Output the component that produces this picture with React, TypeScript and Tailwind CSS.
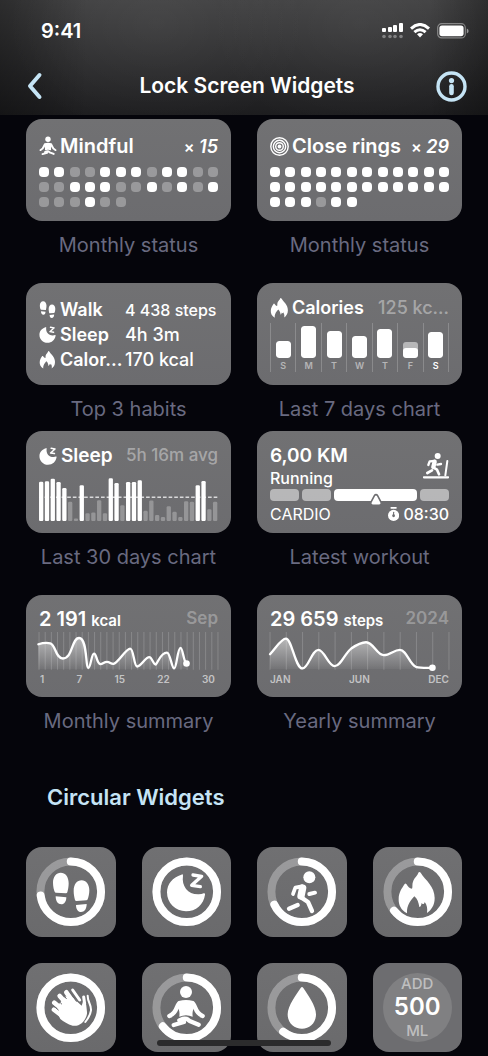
import type { ReactNode } from "react";

type IconProps = { className?: string };

function Icon({ className, children }: IconProps & { children: ReactNode }) {
  return (
    <svg viewBox="0 0 120 120" fill="currentColor" aria-hidden="true" className={`shrink-0 overflow-visible ${className ?? "size-10"}`}>
      {children}
    </svg>
  );
}

function StepsIcon({ className }: IconProps) {
  const foot = "M29 2C16 2 6 14 6 32C6 44 9 54 11 59Q12 62 15 62L45 64Q48 64 49 61C51 54 53 44 53 34C53 14 43 2 29 2ZM14 73L46 76C46 89 40 97 31 97C21 97 14 88 14 73Z";
  return (
    <Icon className={className}>
      <path d={foot} />
      <path d={foot} transform="matrix(-1 0 0 1 121 23)" />
    </Icon>
  );
}

function MoonIcon({ className }: IconProps) {
  return (
    <Icon className={className}>
      <path d="M46 8Q51 5 51 11C46 42 66 68 98 67Q107 67 113 64Q118 62 117 68C113 97 90 118 60 118C28 118 3 93 3 61C3 36 20 16 46 8Z" />
      <path d="M81 9L107 13L77 40L103 44" fill="none" stroke="currentColor" strokeWidth="10" strokeLinecap="round" strokeLinejoin="round" />
    </Icon>
  );
}

function RunnerIcon({ className }: IconProps) {
  return (
    <Icon className={className}>
      <circle cx="82" cy="16" r="18" />
      <g fill="none" stroke="currentColor" strokeLinecap="round" strokeLinejoin="round">
        <path d="M60 43L40 47L33 66" strokeWidth="11" />
        <path d="M62 48L57 72" strokeWidth="22" />
        <path d="M54 74L78 90L90 117" strokeWidth="13" />
        <path d="M47 99L21 110" strokeWidth="13" />
        <path d="M82 66L99 62" strokeWidth="12" />
      </g>
    </Icon>
  );
}

function FlameIcon({ className }: IconProps) {
  return (
    <Icon className={className}>
      <path d="M65 1Q68 -2 71 2C86 26 113 42 113 78C113 100 103 114 90 123C92 110 90 99 83 90C82 97 77 99 74 92C73 100 71 104 67 105C65 92 61 80 52 73C44 83 28 98 30 124C12 114 4 98 5 80C5 62 15 48 23 36Q25 33 28 36C33 44 37 49 45 50C48 44 44 36 49 26C53 17 61 12 65 1Z" />
    </Icon>
  );
}

function ClapIcon({ className }: IconProps) {
  return (
    <Icon className={className}>
      <path d="M16 72L26 48L44 28L66 32L92 56L99 34Q109 56 108 80C104 104 84 120 65 116C50 112 38 104 28 96Z" />
      <g fill="none" stroke="currentColor" strokeLinecap="round" strokeWidth="14">
        <path d="M9 68L46 96" />
        <path d="M10 47L55 85" />
        <path d="M26 27L65 71" />
        <path d="M46 16L80 64" />
      </g>
      <path d="M65 9L86 39" fill="none" stroke="currentColor" strokeLinecap="round" strokeWidth="9" />
      <path d="M98 30L101 51" fill="none" stroke="currentColor" strokeLinecap="round" strokeWidth="9" />
      <path d="M110 26C110 47 121 51 120 70C118 84 111 95 103 105" fill="none" stroke="currentColor" strokeLinecap="round" strokeWidth="6" />
      <path d="M8 57L22 69M17 36L32 51M35 20L46 35M56 13L76 43" fill="none" stroke="#6b6b6e" strokeLinecap="round" strokeWidth="3" />
    </Icon>
  );
}

function MindfulIcon({ className }: IconProps) {
  return (
    <Icon className={className}>
      <circle cx="60" cy="15" r="18" />
      <path d="M38 42Q60 36 82 42L84 64Q78 72 80 89Q60 80 40 89Q42 72 36 64Z" />
      <g fill="none" stroke="currentColor" strokeLinecap="round" strokeLinejoin="round" strokeWidth="13">
        <path d="M39 49C29 60 34 78 10 87" />
        <path d="M81 49C91 60 86 78 110 87" />
        <path d="M40 100Q60 90 71 102L98 113" />
        <path d="M23 114L54 105" />
      </g>
    </Icon>
  );
}

function DropIcon({ className }: IconProps) {
  return (
    <Icon className={className}>
      <path d="M56 3Q60 -3 64 3C76 22 102 56 102 82C102 108 83 125 60 125C36 125 17 108 17 82C17 56 44 22 56 3Z" />
    </Icon>
  );
}

function RingsIcon({ className }: IconProps) {
  return (
    <Icon className={className}>
      <g fill="none" stroke="currentColor" strokeWidth="9">
        <circle cx="60" cy="60" r="55" />
        <circle cx="60" cy="60" r="39" />
        <circle cx="60" cy="60" r="24" />
      </g>
      <circle cx="60" cy="60" r="12" />
    </Icon>
  );
}

function TreadmillIcon({ className }: IconProps) {
  return (
    <svg viewBox="0 0 78 78" fill="none" stroke="currentColor" strokeLinecap="round" strokeLinejoin="round" aria-hidden="true" className={className}>
      <circle cx="44" cy="9" r="9" fill="currentColor" stroke="none" />
      <path d="M34 24L20 25L16 36" strokeWidth="7" />
      <path d="M35 26L31 42" strokeWidth="13" />
      <path d="M30 43L42 50L48 64" strokeWidth="8" />
      <path d="M27 52L13 60" strokeWidth="8" />
      <path d="M43 35L54 33" strokeWidth="7" />
      <path d="M73 24L67 67" strokeWidth="6" />
      <path d="M3 73H75" strokeWidth="7" />
    </svg>
  );
}

function StopwatchIcon({ className }: IconProps) {
  return (
    <svg viewBox="0 0 32 40" fill="currentColor" aria-hidden="true" className={className}>
      <rect x="7" y="0" width="18" height="5" rx="2" />
      <circle cx="16" cy="24" r="16" />
      <path d="M16 15V25" stroke="#6e6e71" strokeWidth="3" strokeLinecap="round" />
      <circle cx="16" cy="25" r="4" fill="#6e6e71" />
    </svg>
  );
}

const mindfulDays = "110011101100" + "001110010101" + "000100";
const ringDays = "111111111111" + "111111111111" + "111011";

const habits = [
  { name: "Walk", value: "4 438 steps", size: "text-[16px]", icon: StepsIcon },
  { name: "Sleep", value: "4h 3m", size: "text-[18px]", icon: MoonIcon },
  { name: "Calor...", value: "170 kcal", size: "text-[18px]", icon: FlameIcon },
];

const week = [
  { day: "S", height: 17 },
  { day: "M", height: 32 },
  { day: "T", height: 27 },
  { day: "W", height: 22 },
  { day: "T", height: 29 },
  { day: "F", height: 10, goal: 16 },
  { day: "S", height: 26, today: true },
];

const sleep = [
  119, 120, 128, 118, 100, 58, 8, 108, 24, 26, 63, 24, 129, 115, 48, 118, 118, 123, 31, 62, 18, 12, 45, 28, 12, 60, 58, 108, 121,
  36, 58,
];

const tiles = [
  { label: "Steps", progress: 0.73, icon: StepsIcon },
  { label: "Sleep", progress: 1, icon: MoonIcon },
  { label: "Running", progress: 0.68, icon: RunnerIcon },
  { label: "Calories", progress: 0.643, icon: FlameIcon },
  { label: "Hand washing", progress: 1, icon: ClapIcon },
  { label: "Mindful", progress: 0.645, icon: MindfulIcon },
  { label: "Water", progress: 0.605, icon: DropIcon },
];

function Widget({ caption, children }: { caption: string; children: ReactNode }) {
  return (
    <figure>
      <div className="h-[102px] overflow-hidden rounded-2xl bg-linear-to-b from-[#717173] to-[#6c6c6f] px-[13px] text-white">{children}</div>
      <figcaption className="h-[46px] text-center text-[20px] leading-[48px] text-[#696a80]">{caption}</figcaption>
    </figure>
  );
}

function Dots({ days }: { days: string }) {
  return (
    <div className="mt-2 grid grid-cols-[repeat(12,10px)] justify-between gap-y-[5px]">
      {days.split("").map((d, i) => (
        <span key={i} className={`size-[10px] rounded-[4px] ${d === "1" ? "bg-white" : "bg-white/30"}`} />
      ))}
    </div>
  );
}

function StatusWidget({ title, icon, count, days }: { title: string; icon: ReactNode; count: number; days: string }) {
  return (
    <>
      <div className="mt-[14px] flex h-[26px] items-center text-[20px] font-semibold">
        {icon}
        <span className="ml-[3px] whitespace-nowrap">{title}</span>
        <span className="ml-auto text-[18px] whitespace-nowrap">
          <span className="text-[16px]">×</span> <em>{count}</em>
        </span>
      </div>
      <Dots days={days} />
    </>
  );
}

function LineChart({ id, path, end, lines, floor }: { id: string; path: string; end: [number, number]; lines: number; floor: string }) {
  return (
    <svg viewBox="0 0 540 114" className="block w-full overflow-visible" aria-hidden="true">
      <defs>
        <linearGradient id={id} x1="0" y1="0" x2="0" y2="1">
          <stop offset="0" stopColor="#fff" stopOpacity="0.5" />
          <stop offset="1" stopColor="#fff" stopOpacity="0.04" />
        </linearGradient>
      </defs>
      {Array.from({ length: lines }, (_, i) => (
        <path key={i} d={`M${(i * 540) / (lines - 1)} 0V114`} stroke="#fff" strokeOpacity="0.18" strokeWidth="3" />
      ))}
      <path d={path + floor} fill={`url(#${id})`} />
      <path d={path} fill="none" stroke="#fff" strokeWidth="7" strokeLinecap="round" strokeLinejoin="round" />
      <circle cx={end[0]} cy={end[1]} r="10" fill="#fff" />
    </svg>
  );
}

function Ring({ progress, children }: { progress: number; children: ReactNode }) {
  return (
    <div className="relative flex aspect-square items-center justify-center rounded-2xl bg-linear-to-b from-[#707072] to-[#6a6a6c] text-white">
      <svg viewBox="0 0 90 90" fill="none" strokeWidth="8" className="absolute inset-0 size-full -rotate-90" aria-hidden="true">
        <circle cx="45" cy="45" r="30.5" stroke="#fff" strokeOpacity="0.3" />
        <circle cx="45" cy="45" r="30.5" stroke="#fff" strokeLinecap="round" pathLength={100} strokeDasharray={`${progress * 100} 100`} />
      </svg>
      {children}
    </div>
  );
}

export default function App() {
  return (
    <div className="relative min-h-screen bg-[#05050b] pb-1 font-['Inter',sans-serif]">
      <header className="h-[115px] bg-[radial-gradient(ellipse_150px_115px_at_32%_20%,#ffffff0d,transparent),radial-gradient(ellipse_150px_115px_at_74%_20%,#ffffff0d,transparent),linear-gradient(90deg,#0000004d,transparent_18%,transparent_88%,#0000004d),linear-gradient(#404041,#1d1d1f)] text-white">
        <div className="flex h-[58px] items-center justify-between pt-[3px] pr-[19px] pl-[41px]">
          <span className="text-[20px] font-semibold">9:41</span>
          <div className="flex items-center gap-[7px]">
            <svg viewBox="0 0 21 16" className="w-[21px]" fill="#fff" aria-hidden="true">
              <rect x="0" y="5" width="4" height="4" rx="1" />
              <rect x="6" y="4" width="4" height="5" rx="1" />
              <rect x="11" y="2" width="4" height="7" rx="1" />
              <rect x="17" y="0" width="4" height="9" rx="1" />
              <g opacity="0.35">
                <circle cx="2" cy="13.500" r="1.800" />
                <circle cx="8" cy="13.500" r="1.800" />
                <circle cx="13" cy="13.500" r="1.800" />
                <circle cx="19" cy="13.500" r="1.800" />
              </g>
            </svg>
            <svg viewBox="0 0 20 15" className="w-5" fill="none" stroke="#fff" strokeWidth="3" aria-hidden="true">
              <path d="M1 5.6Q10 -2.6 19 5.6" />
              <path d="M4.4 9.2Q10 4.2 15.6 9.2" />
              <path d="M10 14.4L7 11.2Q10 9 13 11.2Z" fill="#fff" stroke="none" />
            </svg>
            <svg viewBox="0 0 32 16" className="w-8" fill="none" aria-hidden="true">
              <rect x="0.7" y="0.7" width="27.6" height="14.2" rx="4" stroke="#fff" strokeOpacity="0.4" strokeWidth="1.2" />
              <rect x="2.4" y="2.4" width="24.2" height="10.8" rx="2.6" fill="#fff" />
              <path d="M29.8 5.4Q31.6 6.2 31.6 7.9T29.8 10.4Z" fill="#fff" fillOpacity="0.5" />
            </svg>
          </div>
        </div>
        <div className="flex h-14 items-center justify-between pr-[21px] pl-[27px] text-[#c5e4f5]">
          <button type="button" aria-label="Back" className="w-[31px]">
            <svg viewBox="0 0 16 28" className="h-7" fill="none" stroke="currentColor" strokeWidth="4" strokeLinecap="round" strokeLinejoin="round">
              <path d="M12.500 3L3 14L12.500 25" />
            </svg>
          </button>
          <h1 className="text-[21px] font-semibold text-white">Lock Screen Widgets</h1>
          <button type="button" aria-label="Info">
            <svg viewBox="0 0 31 31" className="size-[31px]" fill="none" stroke="currentColor" strokeLinecap="round">
              <circle cx="15.5" cy="15.5" r="13.5" strokeWidth="3.4" />
              <path d="M15.5 15.2V22" strokeWidth="4.6" />
              <circle cx="15.5" cy="9.6" r="2.6" fill="currentColor" stroke="none" />
            </svg>
          </button>
        </div>
      </header>

      <main className="px-[26px] pt-1">
        <div className="grid grid-cols-2 gap-x-[26px]">
          <Widget caption="Monthly status">
            <StatusWidget title="Mindful" icon={<MindfulIcon className="size-[18px]" />} count={15} days={mindfulDays} />
          </Widget>
          <Widget caption="Monthly status">
            <StatusWidget title="Close rings" icon={<RingsIcon className="size-[19px]" />} count={29} days={ringDays} />
          </Widget>
        </div>

        <div className="mt-4 grid grid-cols-2 gap-x-[26px]">
          <Widget caption="Top 3 habits">
            <ul className="pt-[14px]">
              {habits.map(({ name, value, size, icon: HabitIcon }) => (
                <li key={name} className="flex h-[25px] items-center">
                  <HabitIcon className="size-[17px]" />
                  <span className="ml-1 w-[65px] text-[18px] font-semibold whitespace-nowrap">{name}</span>
                  <span className={`font-medium whitespace-nowrap ${size}`}>{value}</span>
                </li>
              ))}
            </ul>
          </Widget>
          <Widget caption="Last 7 days chart">
            <div className="mt-[11px] flex h-[26px] items-center font-semibold">
              <FlameIcon className="size-[19px]" />
              <span className="ml-[3px] text-[18px]">Calories</span>
              <span className="ml-auto text-[18px] font-medium text-white/40">125 kc...</span>
            </div>
            <div className="mt-[3px] flex h-[49px] border-r border-white/20">
              {week.map((d, i) => (
                <div key={i} className="flex flex-1 flex-col items-center justify-end border-l border-white/20">
                  <div className={`flex w-[15px] items-end overflow-hidden rounded-[3px] ${d.goal ? "bg-white/50" : ""}`} style={{ height: d.goal ?? d.height }}>
                    <div className="w-full rounded-[3px] bg-white" style={{ height: d.height }} />
                  </div>
                  <span className={`h-[14px] text-[9px] leading-[16px] font-semibold ${d.today ? "text-white" : "text-white/50"}`}>{d.day}</span>
                </div>
              ))}
            </div>
          </Widget>
        </div>

        <div className="grid grid-cols-2 gap-x-[26px]">
          <Widget caption="Last 30 days chart">
            <div className="mt-3 flex h-[26px] items-center font-semibold">
              <MoonIcon className="size-[18px]" />
              <span className="ml-1 text-[19px]">Sleep</span>
              <span className="ml-auto text-[17px] font-medium text-white/40">5h 16m avg</span>
            </div>
            <svg viewBox="0 0 540 130" className="mt-[9px] block w-full" aria-hidden="true">
              {sleep.map((h, i) => (
                <rect key={i} x={i * 17.5} y={130 - h} width="13" height={h} rx="4" fill="#fff" fillOpacity={h > 90 ? 1 : 0.28} />
              ))}
              <path d="M0 58H540" stroke="#fff" strokeOpacity="0.75" strokeWidth="4" strokeDasharray="11 6" />
            </svg>
          </Widget>
          <Widget caption="Latest workout">
            <div className="flex h-[58px] items-center justify-between pt-3">
              <div>
                <p className="text-[19px] leading-6 font-semibold">6,00 KM</p>
                <p className="text-[16px] leading-5 font-medium">Running</p>
              </div>
              <TreadmillIcon className="size-[26px]" />
            </div>
            <div className="relative flex h-3 gap-[3px]">
              <span className="flex-1 rounded-[4px] bg-white/50" />
              <span className="flex-1 rounded-[4px] bg-white/50" />
              <span className="w-[83px] rounded-[4px] bg-white" />
              <span className="flex-1 rounded-[4px] bg-white/50" />
              <svg viewBox="0 0 16 14" className="absolute top-1 left-[59%] h-[14px] w-4 -translate-x-1/2" aria-hidden="true">
                <path d="M6.4 2.6Q8 0.6 9.6 2.6L13 9Q14 12.2 11 12.2H5Q2 12.2 3 9Z" fill="#fff" stroke="#6e6e71" strokeWidth="1.6" />
              </svg>
            </div>
            <div className="flex h-[26px] items-center text-[16px]">
              <span>CARDIO</span>
              <StopwatchIcon className="mr-1 ml-auto h-[14px]" />
              <span className="font-medium">08:30</span>
            </div>
          </Widget>
        </div>

        <div className="mt-4 grid grid-cols-2 gap-x-[26px]">
          <Widget caption="Monthly summary">
            <div className="mt-[11px] flex h-[26px] items-center justify-between font-semibold">
              <span className="text-[20px]">
                2 191 <span className="text-[15px]">kcal</span>
              </span>
              <span className="text-[17px] text-white/30">Sep</span>
            </div>
            <LineChart
              id="month"
              lines={30}
              end={[445, 95]}
              floor="V112H-2Z"
              path="M-2 37C14 32 24 32 34 34C50 38 50 80 72 80C102 80 98 18 121 18C146 18 140 108 149 108C156 108 158 65 166 65C174 65 174 96 185 97C193 97 196 90 205 90C215 90 216 97 225 96C240 92 262 50 275 50C286 50 286 104 296 104C308 104 320 76 333 76C341 76 344 98 352 98C360 92 366 62 386 62C396 62 400 110 408 110C415 110 418 48 427 48C434 48 436 90 445 95"
            />
            <div className="flex justify-between pr-[3px] pl-px text-[10px] leading-[18px] font-semibold text-white/60">
              <span>1</span>
              <span>7</span>
              <span>15</span>
              <span>22</span>
              <span>30</span>
            </div>
          </Widget>
          <Widget caption="Yearly summary">
            <div className="mt-[11px] flex h-[26px] items-center justify-between font-semibold">
              <span className="text-[20px]">
                29 659 <span className="text-[15px]">steps</span>
              </span>
              <span className="text-[17px] text-white/30">2024</span>
            </div>
            <LineChart
              id="year"
              lines={12}
              end={[490, 108]}
              floor="V112H0Z"
              path="M0 67C20 45 34 20 48 20C66 20 76 110 98 110C116 110 126 54 146 54C164 54 176 103 195 103C214 103 224 66 245 50C262 38 276 31 290 31C312 31 322 70 343 70C362 70 374 54 392 54C412 54 420 96 440 105C454 109 470 108 490 108"
            />
            <div className="flex justify-between text-[10px] leading-[18px] font-semibold text-white/60">
              <span>JAN</span>
              <span>JUN</span>
              <span>DEC</span>
            </div>
          </Widget>
        </div>

        <h2 className="mt-9 pl-[21px] text-[22px] leading-9 font-semibold text-[#c5e4f5]">Circular Widgets</h2>
        <div className="mt-8 grid grid-cols-4 gap-[26px]">
          {tiles.map(({ label, progress, icon: TileIcon }) => (
            <div key={label} role="img" aria-label={label}>
              <Ring progress={progress}>
                <TileIcon />
              </Ring>
            </div>
          ))}
          <button type="button" className="flex aspect-square items-center justify-center rounded-2xl bg-[#6d6d70]">
            <span className="flex size-[69px] flex-col items-center justify-center rounded-full bg-[#808082] font-semibold text-white">
              <span className="text-[15px] leading-[23px] font-medium text-white/50">ADD</span>
              <span className="text-[24px] leading-[24px]">500</span>
              <span className="text-[15px] leading-[23px] font-medium text-white/50">ML</span>
            </span>
          </button>
        </div>
      </main>

      <div className="absolute bottom-[10px] left-1/2 h-[6px] w-[174px] -translate-x-1/2 rounded-full bg-[#2b2b2c]" />
    </div>
  );
}
